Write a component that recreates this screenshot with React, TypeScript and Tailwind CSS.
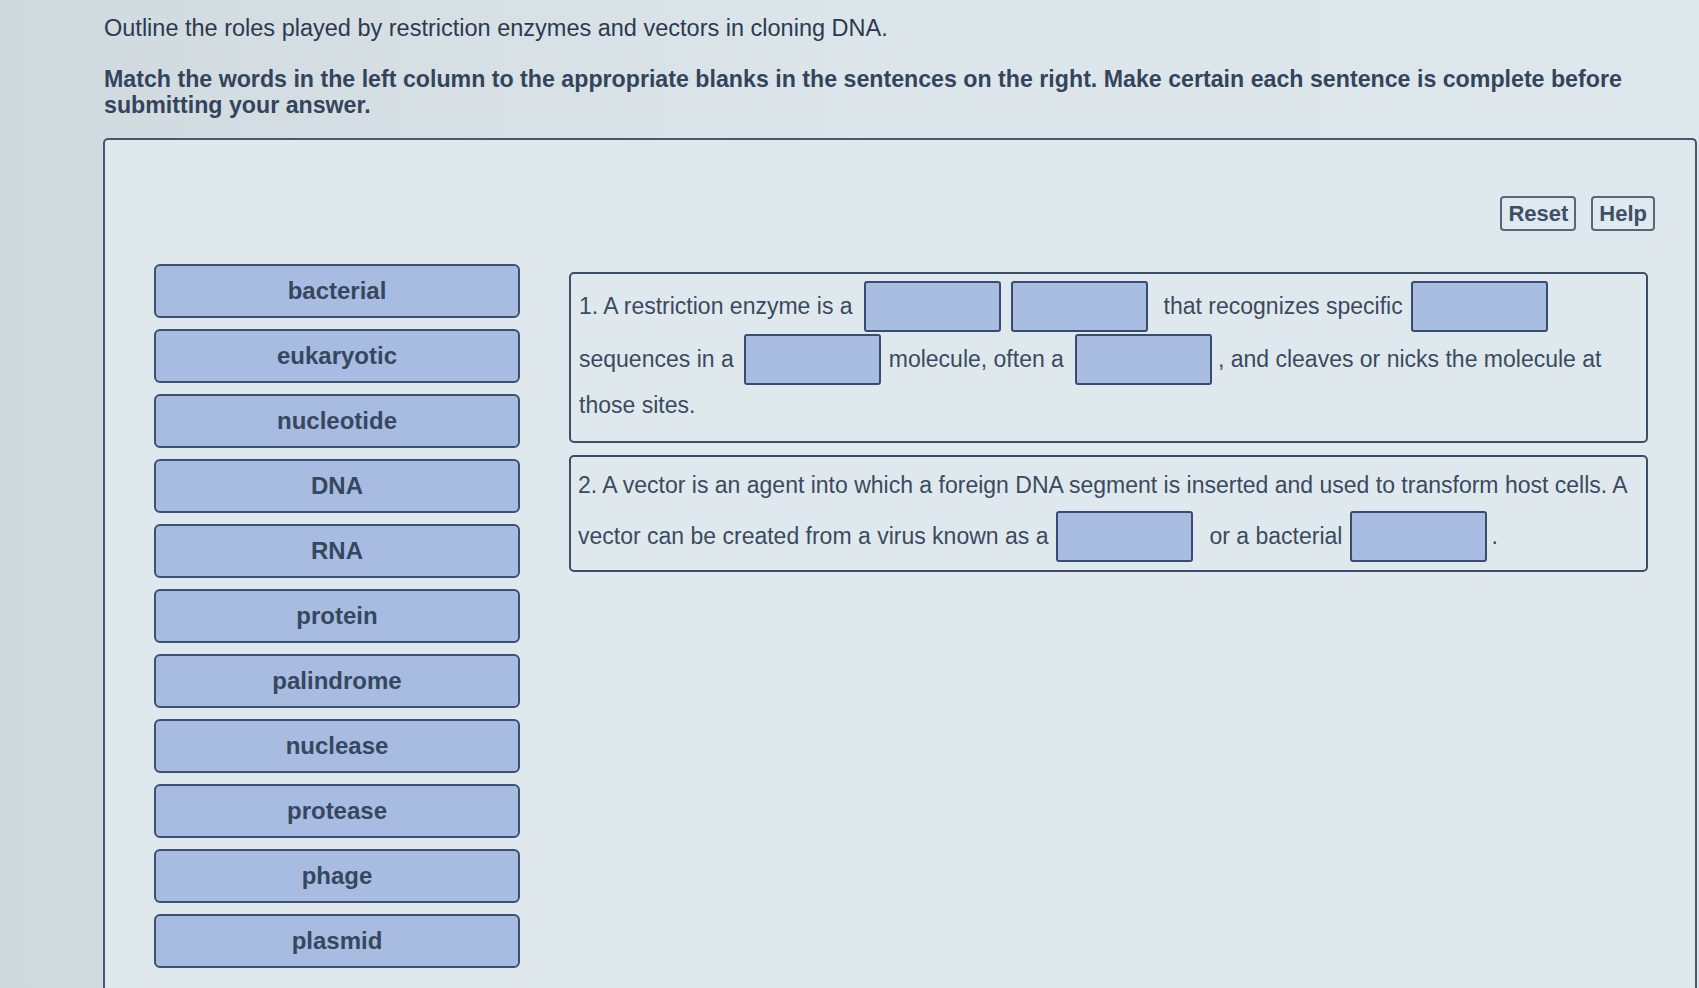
import React from 'react';

const words = [
  'bacterial',
  'eukaryotic',
  'nucleotide',
  'DNA',
  'RNA',
  'protein',
  'palindrome',
  'nuclease',
  'protease',
  'phage',
  'plasmid',
];

function Blank({ className = '' }: { className?: string }) {
  return (
    <div
      className={`h-[51px] w-[137px] shrink-0 rounded-[3px] border-2 border-[#3a4d6e] bg-[#a9bce2] ${className}`}
    />
  );
}

function WordTile({ label }: { label: string }) {
  return (
    <div className="flex h-[54px] w-[366px] items-center justify-center rounded-md border-2 border-[#3a5173] bg-[#a8bce1] text-[24px] font-bold text-[#36475f]">
      {label}
    </div>
  );
}

function SmallButton({ label }: { label: string }) {
  return (
    <button className="flex h-[35px] items-center rounded-[4px] border-2 border-[#56677d] bg-[#dfe9ee] px-1.5 text-[22px] font-bold text-[#3e4f67]">
      {label}
    </button>
  );
}

export default function App() {
  return (
    <div
      className="h-[988px] overflow-hidden bg-gradient-to-r from-[#cfd9de] via-[#dce6ea] to-[#dee8ec] text-[#34445b]"
      style={{ fontFamily: '"Liberation Sans", Arial, sans-serif' }}
    >
      <div className="pl-[104px] pt-[14px]">
        <h1 className="text-[23.5px] leading-[28px] font-normal text-[#2c3a50]">
          Outline the roles played by restriction enzymes and vectors in cloning DNA.
        </h1>
        <p className="mt-6 w-[1560px] text-[23.2px] leading-[26px] font-bold text-[#34445c]">
          Match the words in the left column to the appropriate blanks in the sentences on the right. Make certain each sentence is complete before submitting your answer.
        </p>
      </div>

      <div className="ml-[103px] mt-[20px] h-[900px] w-[1594px] rounded-t-[5px] border-x-2 border-t-2 border-[#46586f] bg-[#dfe9ed]">
        <div className="flex justify-end gap-[15px] pr-[40px] pt-[56px]">
          <SmallButton label="Reset" />
          <SmallButton label="Help" />
        </div>

        <div className="mt-[33px] flex gap-[49px] pl-[49px]">
          <div className="flex flex-col gap-[11px]">
            {words.map((w) => (
              <WordTile key={w} label={w} />
            ))}
          </div>

          <div className="mt-[8px] flex w-[1079px] flex-col gap-[12px] text-[23px] text-[#3a4a60]">
            <div className="rounded-[5px] border-2 border-[#3b4e69] pb-[22px] pl-[8px] pt-[7px]">
              <div className="flex h-[51px] items-center whitespace-nowrap">
                <span>1. A restriction enzyme is a</span>
                <Blank className="ml-[11px]" />
                <Blank className="ml-[10px]" />
                <span className="ml-[16px]">that recognizes specific</span>
                <Blank className="ml-[8px]" />
              </div>
              <div className="mt-[2px] flex h-[51px] items-center whitespace-nowrap">
                <span>sequences in a</span>
                <Blank className="ml-[10px]" />
                <span className="ml-[8px]">molecule, often a</span>
                <Blank className="ml-[11px]" />
                <span className="ml-[6px]">, and cleaves or nicks the molecule at</span>
              </div>
              <div className="mt-[6px] h-[28px] leading-[28px]">those sites.</div>
            </div>

            <div className="rounded-[5px] border-2 border-[#3b4e69] pb-[8px] pl-[7px] pt-[14px]">
              <div className="h-[28px] whitespace-nowrap leading-[28px]">
                2. A vector is an agent into which a foreign DNA segment is inserted and used to transform host cells. A
              </div>
              <div className="mt-[12px] flex h-[51px] items-center whitespace-nowrap">
                <span>vector can be created from a virus known as a</span>
                <Blank className="ml-[8px]" />
                <span className="ml-[16px]">or a bacterial</span>
                <Blank className="ml-[8px]" />
                <span className="ml-[4px]">.</span>
              </div>
            </div>
          </div>
        </div>
      </div>
    </div>
  );
}
